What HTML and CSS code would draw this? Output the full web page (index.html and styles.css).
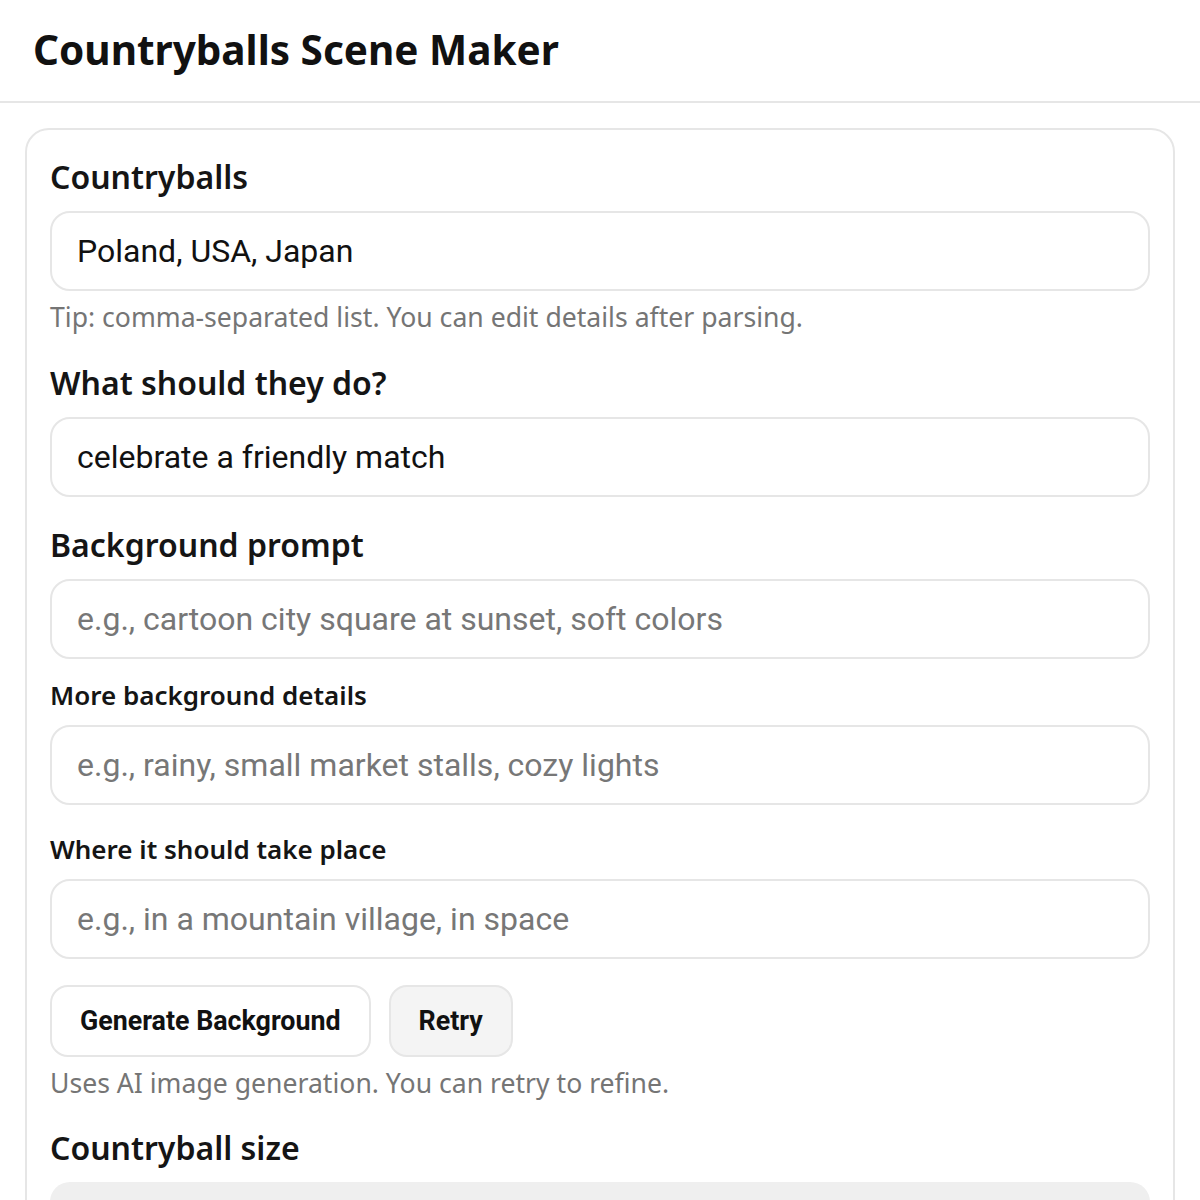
FILE: index.html
```html
<!DOCTYPE html>
<html lang="en">
<head>
<meta charset="utf-8">
<title>Countryballs Scene Maker</title>
<link rel="stylesheet" href="styles.css">
</head>
<body>
<header class="topbar">
  <h1 class="title">Countryballs Scene Maker</h1>
</header>
<main class="page">
  <section class="card">
    <div class="field">
      <label class="label">Countryballs</label>
      <input class="input" type="text" value="Poland, USA, Japan">
      <p class="hint">Tip: comma-separated list. You can edit details after parsing.</p>
    </div>
    <div class="field">
      <label class="label">What should they do?</label>
      <input class="input" type="text" value="celebrate a friendly match">
    </div>
    <div class="field">
      <label class="label">Background prompt</label>
      <input class="input" type="text" placeholder="e.g., cartoon city square at sunset, soft colors">
    </div>
    <div class="field field-sub">
      <label class="label label-sm">More background details</label>
      <input class="input" type="text" placeholder="e.g., rainy, small market stalls, cozy lights">
    </div>
    <div class="field">
      <label class="label label-sm">Where it should take place</label>
      <input class="input" type="text" placeholder="e.g., in a mountain village, in space">
    </div>
    <div class="field">
      <div class="actions">
        <button class="btn">Generate Background</button>
        <button class="btn btn-muted">Retry</button>
      </div>
      <p class="hint">Uses AI image generation. You can retry to refine.</p>
    </div>
    <div class="field field-last">
      <label class="label">Countryball size</label>
      <div class="slider-box"></div>
    </div>
  </section>
</main>
</body>
</html>
```

FILE: styles.css
```css
* { box-sizing: border-box; }
html, body { margin: 0; padding: 0; background: #fff; }
body {
  font-family: "Noto Sans", sans-serif;
  color: #151515;
  height: 1200px;
  overflow: hidden;
}
.topbar {
  height: 103px;
  border-bottom: 2px solid #e6e6e6;
  padding: 0 33px;
  display: flex;
  align-items: center;
}
.title {
  margin: 0;
  font-size: 40.5px;
  font-weight: 700;
  color: #111;
  line-height: 1;
}
.page {
  padding: 25px 25px 0 25px;
}
.card {
  border: 2px solid #e6e6e6;
  border-radius: 24px;
  padding: 25px 23px 40px 23px;
  background: #fff;
  display: flex;
  flex-direction: column;
  gap: 26px;
}
.field { display: flex; flex-direction: column; }
.field-sub { margin-top: -8px; }
.field-last { margin-top: -1px; }
.label {
  font-size: 32px;
  font-weight: 600;
  line-height: 44px;
  margin-bottom: 12px;
  color: #151515;
}
.label-sm {
  font-size: 26px;
  line-height: 36px;
}
.field-last .label { margin-bottom: 12px; }
.input {
  height: 80px;
  border: 2px solid #e6e6e6;
  border-radius: 20px;
  padding: 0 25px;
  font-family: Roboto, sans-serif;
  font-size: 32px;
  color: #111;
  background: #fff;
  outline: none;
  margin: 0;
}
.input::placeholder { color: #777; }
.hint {
  margin: 8px 0 0 0;
  font-size: 26.6px;
  color: #757575;
  line-height: 36px;
}
.actions {
  display: flex;
  gap: 18px;
}
.btn {
  height: 72px;
  padding: 0 28px;
  border: 2px solid #e6e6e6;
  border-radius: 18px;
  background: #fff;
  font-family: Roboto, sans-serif;
  font-weight: 700;
  font-size: 26.8px;
  color: #111;
}
.btn-muted { background: #f4f4f4; }
.slider-box {
  height: 80px;
  border-radius: 20px;
  background: #efefef;
}
```
